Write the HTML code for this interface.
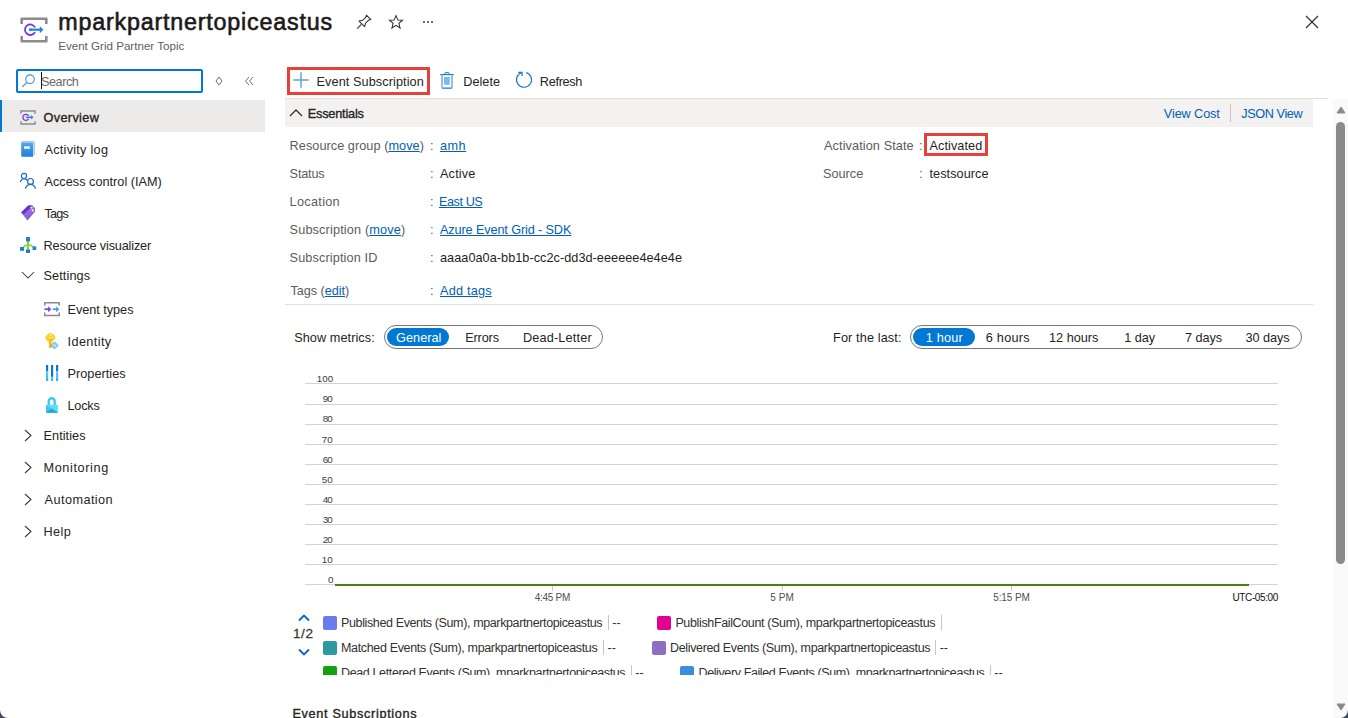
<!DOCTYPE html>
<html><head><meta charset="utf-8"><style>
html,body{margin:0;padding:0;width:1348px;height:718px;overflow:hidden;background:#fff}
body{position:relative;font-family:"Liberation Sans", sans-serif}
.t{position:absolute;white-space:nowrap;line-height:1;font-family:"Liberation Sans", sans-serif}
.a{position:absolute}
svg{position:absolute;overflow:visible}
</style></head><body>
<!-- header icon -->
<svg width="28" height="26" style="left:20px;top:17px" viewBox="0 0 28 26">
 <path d="M1.7 7 V1.7 H26.3 V7" fill="none" stroke="#8c8c8c" stroke-width="2.6" stroke-linejoin="round"/>
 <path d="M1.7 19 V24.3 H26.3 V19" fill="none" stroke="#8c8c8c" stroke-width="2.6" stroke-linejoin="round"/>
 <path d="M15 10.3 A5.3 5.3 0 1 0 15 15.1" fill="none" stroke="#7a30dc" stroke-width="1.8"/>
 <circle cx="10.3" cy="12.7" r="1.45" fill="#1f84e3"/>
 <path d="M10.3 12.7 H21" stroke="#1f84e3" stroke-width="2.2"/>
 <path d="M19.8 9.2 L23.4 12.7 L19.8 16.3 Z" fill="#1f84e3"/>
</svg>
<!-- pin -->
<svg width="16" height="16" style="left:356px;top:14px" viewBox="0 0 16 16">
 <path d="M10.4 1.2 L14.9 5.6 L12.7 6.1 L9.6 9.2 L8.6 12.6 L3 7.1 L6.6 6.3 L9.7 3.3 Z" fill="none" stroke="#323130" stroke-width="1.05" stroke-linejoin="round"/>
 <path d="M5.4 10.3 L1.2 14.6" stroke="#323130" stroke-width="1.1"/>
</svg>
<!-- star -->
<svg width="16" height="16" style="left:388px;top:14px" viewBox="0 0 16 16">
 <path d="M8 1.6 L9.9 6.1 L14.5 6.3 L10.9 9.3 L12.1 14 L8 11.4 L3.9 14 L5.1 9.3 L1.5 6.3 L6.1 6.1 Z" fill="none" stroke="#323130" stroke-width="1.05" stroke-linejoin="miter"/>
</svg>
<!-- ellipsis -->
<div class=a style="left:423px;top:21px;width:2px;height:2px;background:#6a6a6a"></div>
<div class=a style="left:427px;top:21px;width:2px;height:2px;background:#6a6a6a"></div>
<div class=a style="left:431px;top:21px;width:2px;height:2px;background:#6a6a6a"></div>
<!-- close -->
<svg width="14" height="14" style="left:1305px;top:15px" viewBox="0 0 14 14">
 <path d="M1 1 L13 13 M13 1 L1 13" stroke="#323130" stroke-width="1.2"/>
</svg>

<!-- search box -->
<div class=a style="left:16px;top:69px;width:183px;height:20px;border:2px solid #0078d4;border-radius:2px;background:#fff"></div>
<svg width="16" height="16" style="left:21px;top:73px" viewBox="0 0 16 16">
 <circle cx="9" cy="6.2" r="4.3" fill="none" stroke="#3a8de0" stroke-width="1.1"/>
 <path d="M5.9 9.3 L1.3 13.9" stroke="#3a8de0" stroke-width="1.2"/>
</svg>
<div class=a style="left:41px;top:72px;width:1px;height:17px;background:#111"></div>
<svg width="10" height="10" style="left:214px;top:76px" viewBox="0 0 10 10">
 <path d="M5 1 L8 5 L5 9 L2 5 Z" fill="none" stroke="#6e6e6e" stroke-width="1"/>
</svg>
<svg width="12" height="10" style="left:244px;top:76px" viewBox="0 0 12 10">
 <path d="M5 1 L1.5 5 L5 9 M9 1 L5.5 5 L9 9" fill="none" stroke="#6e6e6e" stroke-width="1"/>
</svg>

<!-- sidebar highlight -->
<div class=a style="left:0;top:100px;width:265px;height:32px;background:#edebe9"></div>
<div class=a style="left:0;top:100px;width:2px;height:32px;background:#0078d4"></div>
<!-- overview icon -->
<svg width="16" height="15" style="left:20px;top:110px" viewBox="0 0 28 26">
 <path d="M1.7 6.5 V1.7 H26.3 V6.5" fill="none" stroke="#8c8c8c" stroke-width="2.6"/>
 <path d="M1.7 19.5 V24.3 H26.3 V19.5" fill="none" stroke="#8c8c8c" stroke-width="2.6"/>
 <path d="M15 10.3 A5.3 5.3 0 1 0 15 15.1" fill="none" stroke="#7a30dc" stroke-width="2.2"/>
 <path d="M10.3 12.7 H21" stroke="#1f84e3" stroke-width="2.6"/>
 <path d="M19.5 8.8 L23.6 12.7 L19.5 16.6 Z" fill="#1f84e3"/>
</svg>
<!-- activity log -->
<svg width="16" height="16" style="left:20px;top:141px" viewBox="0 0 16 16">
 <defs><linearGradient id="gb" x1="0" y1="0" x2="0" y2="1"><stop offset="0" stop-color="#56a8ee"/><stop offset="1" stop-color="#1e7fd9"/></linearGradient></defs>
 <rect x="1.8" y="0.4" width="12.6" height="13.8" rx="0.9" fill="#d4e8f8" stroke="#6aa6dc" stroke-width="0.6"/>
 <rect x="1.3" y="1.5" width="11.8" height="14.3" rx="0.9" fill="url(#gb)"/>
 <rect x="4" y="5.4" width="5.9" height="2.3" fill="#ffffff"/>
</svg>
<!-- IAM -->
<svg width="17" height="17" style="left:20px;top:172px" viewBox="0 0 17 17">
 <circle cx="4" cy="3.9" r="2.6" fill="none" stroke="#1466d6" stroke-width="1.2"/>
 <path d="M0.4 9.4 Q2 6.6 4 6.6 Q6.2 6.6 7.3 8.4" fill="none" stroke="#1466d6" stroke-width="1.2" stroke-linecap="round"/>
 <circle cx="10.5" cy="9.4" r="2.9" fill="none" stroke="#1466d6" stroke-width="1.2"/>
 <path d="M5.4 16.2 Q7.3 12.4 10.5 12.4 Q13.7 12.4 15.5 16.2" fill="none" stroke="#1466d6" stroke-width="1.2" stroke-linecap="round"/>
</svg>
<!-- tags -->
<svg width="16" height="16" style="left:20px;top:205px" viewBox="0 0 16 16">
 <defs><linearGradient id="gt" x1="0" y1="0" x2="0.6" y2="1"><stop offset="0" stop-color="#b38ef0"/><stop offset="1" stop-color="#7d55c8"/></linearGradient></defs>
 <path d="M1.2 7.4 L8.2 0.4 H12.4 L15 3 V6.8 L7.4 15.6 Z" fill="url(#gt)"/>
 <path d="M1.2 7.4 L8.2 0.4 H12 L12.6 1 L4 9.2 L2.8 9 Z" fill="#6a2ee0"/>
 <ellipse cx="11.5" cy="2.6" rx="1.1" ry="0.9" fill="#fff"/>
 <ellipse cx="12.8" cy="5.5" rx="1.1" ry="0.9" fill="#fff"/>
</svg>
<!-- resource visualizer -->
<svg width="17" height="17" style="left:20px;top:237px" viewBox="0 0 17 17">
 <path d="M8 4 V12.5" stroke="#86d633" stroke-width="2"/>
 <path d="M2.5 11 Q8 5 14 10.5" fill="none" stroke="#86d633" stroke-width="1.6"/>
 <rect x="6" y="0" width="4" height="4.4" fill="#1f7fe0"/>
 <rect x="0" y="10" width="4" height="3.8" fill="#1f7fe0"/>
 <rect x="12.6" y="9.4" width="3.6" height="3.6" fill="#1f7fe0"/>
 <rect x="6" y="12.4" width="4" height="3.6" fill="#1f7fe0"/>
</svg>
<!-- settings chevron down -->
<svg width="14" height="8" style="left:21px;top:271px" viewBox="0 0 14 8">
 <path d="M1 1 L7 7 L13 1" fill="none" stroke="#3b3a39" stroke-width="1.05"/>
</svg>
<!-- event types icon -->
<svg width="16" height="15" style="left:44px;top:302px" viewBox="0 0 16 15">
 <path d="M0.8 3.6 V0.8 H15.2 V3.6" fill="none" stroke="#8a8a8a" stroke-width="1.5"/>
 <path d="M0.8 10.6 V13.4 H15.2 V10.6" fill="none" stroke="#8a8a8a" stroke-width="1.5"/>
 <path d="M0.5 7.2 H5" stroke="#8a3ce6" stroke-width="1.8"/>
 <path d="M4.2 4.2 L7.3 7.2 L4.2 10.2 Z" fill="#8a3ce6"/>
 <path d="M8.8 7.2 H13" stroke="#3da0f0" stroke-width="1.8"/>
 <path d="M12.2 4.2 L15.3 7.2 L12.2 10.2 Z" fill="#3da0f0"/>
</svg>
<!-- identity key -->
<svg width="14" height="17" style="left:45px;top:332px" viewBox="0 0 14 17">
 <defs><linearGradient id="gk" x1="0" y1="0" x2="0" y2="1"><stop offset="0" stop-color="#ffd21a"/><stop offset="1" stop-color="#f5b40a"/></linearGradient></defs>
 <path d="M5.6 0.9 Q7.2 0.9 8.6 2.6 L10.2 4.8 Q10.6 5.5 10.2 6.2 L8.4 8.6 Q7.5 9.4 6.7 9.4 V15.5 L5.4 16.3 L3.7 15 V13.5 L4.5 12.8 L3.7 12 V9.4 Q2.8 9.4 2 8.6 L0.6 6.4 Q0.2 5.5 0.6 4.8 L2.6 2.6 Q4 0.9 5.6 0.9 Z" fill="url(#gk)"/>
 <rect x="2.2" y="4.8" width="6.8" height="1.6" fill="#ffe57a"/>
 <circle cx="5.6" cy="3.2" r="0.9" fill="#fff"/>
 <path d="M9.5 9.9 L13 13.4 L9.5 16.9 L6 13.4 Z" fill="#a8dcf4" stroke="#3aa0db" stroke-width="0.9"/>
</svg>
<!-- properties -->
<svg width="14" height="17" style="left:45px;top:365px" viewBox="0 0 14 17">
 <defs><linearGradient id="gp1" x1="0" y1="0" x2="0" y2="1"><stop offset="0" stop-color="#1a6fd4"/><stop offset="0.35" stop-color="#1a6fd4"/><stop offset="0.4" stop-color="#5ccff7"/><stop offset="1" stop-color="#2bb6ea"/></linearGradient>
 <linearGradient id="gp2" x1="0" y1="0" x2="0" y2="1"><stop offset="0" stop-color="#1a6fd4"/><stop offset="0.7" stop-color="#1a6fd4"/><stop offset="0.75" stop-color="#5ccff7"/><stop offset="1" stop-color="#2bb6ea"/></linearGradient></defs>
 <rect x="1" y="0" width="2.2" height="16" fill="url(#gp1)"/>
 <rect x="6" y="0" width="2.2" height="16" fill="url(#gp2)"/>
 <rect x="11" y="0" width="2.2" height="16" fill="url(#gp1)"/>
</svg>
<!-- locks -->
<svg width="14" height="17" style="left:45px;top:396px" viewBox="0 0 14 17">
 <path d="M3.8 9 V5.2 A2.95 2.95 0 0 1 9.7 5.2 V9" fill="none" stroke="#3ccbf0" stroke-width="2.4"/>
 <rect x="1" y="8.9" width="11.9" height="7.8" fill="#55e0fa"/>
 <path d="M1 8.9 L12.9 16.7 H1 Z" fill="#46c2e8"/>
 <path d="M1 16.7 L7.2 12.6 L12.9 16.7 Z" fill="#2aa5d6"/>
</svg>
<!-- right chevrons -->
<svg width="8" height="13" style="left:24px;top:429px" viewBox="0 0 8 13"><path d="M1 1 L7 6.5 L1 12" fill="none" stroke="#3b3a39" stroke-width="1.05"/></svg>
<svg width="8" height="13" style="left:24px;top:461px" viewBox="0 0 8 13"><path d="M1 1 L7 6.5 L1 12" fill="none" stroke="#3b3a39" stroke-width="1.05"/></svg>
<svg width="8" height="13" style="left:24px;top:493px" viewBox="0 0 8 13"><path d="M1 1 L7 6.5 L1 12" fill="none" stroke="#3b3a39" stroke-width="1.05"/></svg>
<svg width="8" height="13" style="left:24px;top:525px" viewBox="0 0 8 13"><path d="M1 1 L7 6.5 L1 12" fill="none" stroke="#3b3a39" stroke-width="1.05"/></svg>

<!-- toolbar -->
<div class=a style="left:287px;top:67px;width:137px;height:22px;border:3px solid #e5403a"></div>
<svg width="16" height="16" style="left:293px;top:72px" viewBox="0 0 16 16">
 <path d="M8 0.3 V15.7 M0.2 8 H15.8" stroke="#5fa5e8" stroke-width="1.5"/>
</svg>
<svg width="14" height="17" style="left:440px;top:72px" viewBox="0 0 14 17">
 <path d="M4.7 2.2 V1.8 Q4.7 0.6 5.9 0.6 H8.1 Q9.3 0.6 9.3 1.8 V2.2" fill="none" stroke="#1a7ad8" stroke-width="1"/>
 <path d="M0.3 2.6 H13.7" stroke="#1a7ad8" stroke-width="1.2"/>
 <path d="M2 3.2 V15 M12 3.2 V15" stroke="#74b3ec" stroke-width="1.6"/>
 <path d="M1.8 15.3 Q2 16.1 2.8 16.1 H11.2 Q12 16.1 12.2 15.3" fill="none" stroke="#1a7ad8" stroke-width="1.1"/>
 <rect x="4" y="5" width="5.8" height="7.8" fill="#80b8ee"/>
</svg>
<svg width="18" height="18" style="left:515px;top:71px" viewBox="0 0 18 18">
 <path d="M11.3 1.6 A7.5 7.5 0 1 1 6.3 1.75" fill="none" stroke="#1a7ad8" stroke-width="1.2"/>
 <path d="M3.2 1.3 H7 V5" fill="none" stroke="#1a7ad8" stroke-width="1.3"/>
</svg>
<div class=a style="left:285px;top:98px;width:1043px;height:1px;background:#e1dfdd"></div>
<div class=a style="left:285px;top:99px;width:1028px;height:28px;background:#f3f2f1"></div>
<svg width="14" height="9" style="left:289px;top:108px" viewBox="0 0 14 9">
 <path d="M1 8 L7 2 L13 8" fill="none" stroke="#323130" stroke-width="1.3"/>
</svg>
<div class=a style="left:1230px;top:104px;width:1px;height:18px;background:#c8c6c4"></div>

<!-- activated box -->
<div class=a style="left:924px;top:133px;width:58px;height:17px;border:3px solid #e5403a"></div>
<!-- divider -->
<div class=a style="left:285px;top:304px;width:1028px;height:1px;background:#e1dfdd"></div>

<!-- metrics pills -->
<div class=a style="left:384px;top:325px;width:217px;height:22px;border:1px solid #767676;border-radius:12px"></div>
<div class=a style="left:387px;top:328px;width:62px;height:18px;background:#0078d4;border-radius:9px"></div>
<div class=a style="left:910px;top:325px;width:390px;height:22px;border:1px solid #767676;border-radius:12px"></div>
<div class=a style="left:913px;top:328px;width:62px;height:18px;background:#0078d4;border-radius:9px"></div>

<!-- chart grid -->
<svg width="1348" height="718" style="left:0;top:0">
 <g stroke="#d3d3d3" stroke-width="1"><path d="M305 383.5 H1278"/><path d="M305 404.5 H1278"/><path d="M305 424.5 H1278"/><path d="M305 444.5 H1278"/><path d="M305 464.5 H1278"/><path d="M305 484.5 H1278"/><path d="M305 504.5 H1278"/><path d="M305 524.5 H1278"/><path d="M305 544.5 H1278"/><path d="M305 564.5 H1278"/><path d="M305 584.5 H1278"/></g>
 <g stroke="#c8c8c8" stroke-width="1">
  <path d="M552.5 586 V591"/><path d="M782.5 586 V591"/><path d="M1011.5 586 V591"/>
 </g>
 <path d="M335 585 H1249" stroke="#4f7d14" stroke-width="2"/>
</svg>

<!-- legend -->
<svg width="14" height="9" style="left:297px;top:613px" viewBox="0 0 14 9"><path d="M2 7.5 L7 2.5 L12 7.5" fill="none" stroke="#0f62c6" stroke-width="1.9"/></svg>
<svg width="14" height="9" style="left:297px;top:648px" viewBox="0 0 14 9"><path d="M2 1.5 L7 6.5 L12 1.5" fill="none" stroke="#0f62c6" stroke-width="1.9"/></svg>
<div class=a style="left:0;top:0;width:1348px;height:675px;overflow:hidden">
 <div class=a style="left:323px;top:616px;width:14px;height:14px;border-radius:2px;background:#6a7aef"></div>
 <div class=a style="left:657px;top:616px;width:14px;height:14px;border-radius:2px;background:#e3008c"></div>
 <div class=a style="left:323px;top:641px;width:14px;height:14px;border-radius:2px;background:#2c9aa0"></div>
 <div class=a style="left:652px;top:641px;width:14px;height:14px;border-radius:2px;background:#8d6fc1"></div>
 <div class=a style="left:323px;top:666px;width:14px;height:14px;border-radius:2px;background:#14a10f"></div>
 <div class=a style="left:680px;top:666px;width:14px;height:14px;border-radius:2px;background:#3a8fdc"></div>
 <div class=a style="left:608px;top:615px;width:1px;height:15px;background:#c8c6c4"></div>
 <div class=a style="left:941px;top:615px;width:1px;height:15px;background:#c8c6c4"></div>
 <div class=a style="left:603px;top:640px;width:1px;height:15px;background:#c8c6c4"></div>
 <div class=a style="left:935px;top:640px;width:1px;height:15px;background:#c8c6c4"></div>
 <div class=a style="left:631px;top:665px;width:1px;height:15px;background:#c8c6c4"></div>
 <div class=a style="left:990px;top:665px;width:1px;height:15px;background:#c8c6c4"></div>
</div>

<!-- scrollbar -->
<div class=a style="left:1333px;top:99px;width:15px;height:619px;background:#fafafa"></div>
<svg width="10" height="8" style="left:1336px;top:106px" viewBox="0 0 10 8"><path d="M5 1 L9 7 H1 Z" fill="#8a8a8a" stroke="#8a8a8a" stroke-width="1" stroke-linejoin="round"/></svg>
<div class=a style="left:1336px;top:122px;width:9px;height:442px;background:#8a8a8a;border-radius:4.5px"></div>
<svg width="10" height="8" style="left:1336px;top:703px" viewBox="0 0 10 8"><path d="M1 1 H9 L5 7 Z" fill="#8a8a8a" stroke="#8a8a8a" stroke-width="1" stroke-linejoin="round"/></svg>

<div class=t style="left:58.20px;top:10.80px;font-size:23.3px;color:#1b1a19;letter-spacing:0.800px;-webkit-text-stroke:0.6px #1b1a19">mparkpartnertopiceastus</div><div class=t style="left:58.20px;top:39.90px;font-size:11.6px;color:#605e5c;">Event Grid Partner Topic</div><div class=t style="left:41.00px;top:76.00px;font-size:12.7px;color:#6b6a69;letter-spacing:-0.480px;">Search</div><div class=t style="left:43.50px;top:111.80px;font-size:12.7px;color:#252423;letter-spacing:0.357px;-webkit-text-stroke:0.35px #252423">Overview</div><div class=t style="left:44.50px;top:144.00px;font-size:12.7px;color:#252423;letter-spacing:0.255px;">Activity log</div><div class=t style="left:44.50px;top:176.00px;font-size:12.7px;color:#252423;letter-spacing:0.016px;">Access control (IAM)</div><div class=t style="left:44.50px;top:208.00px;font-size:12.7px;color:#252423;letter-spacing:-0.833px;">Tags</div><div class=t style="left:43.50px;top:240.00px;font-size:12.7px;color:#252423;letter-spacing:-0.167px;">Resource visualizer</div><div class=t style="left:43.50px;top:270.00px;font-size:12.7px;color:#252423;letter-spacing:0.100px;">Settings</div><div class=t style="left:67.50px;top:304.00px;font-size:12.7px;color:#252423;letter-spacing:-0.030px;">Event types</div><div class=t style="left:67.50px;top:336.00px;font-size:12.7px;color:#252423;letter-spacing:0.400px;">Identity</div><div class=t style="left:67.50px;top:368.00px;font-size:12.7px;color:#252423;letter-spacing:0.033px;">Properties</div><div class=t style="left:67.50px;top:400.00px;font-size:12.7px;color:#252423;letter-spacing:-0.200px;">Locks</div><div class=t style="left:43.50px;top:430.00px;font-size:12.7px;color:#252423;letter-spacing:0.057px;">Entities</div><div class=t style="left:43.50px;top:462.00px;font-size:12.7px;color:#252423;letter-spacing:0.611px;">Monitoring</div><div class=t style="left:44.50px;top:494.00px;font-size:12.7px;color:#252423;letter-spacing:0.444px;">Automation</div><div class=t style="left:43.50px;top:526.00px;font-size:12.7px;color:#252423;letter-spacing:0.367px;">Help</div><div class=t style="left:316.50px;top:76.00px;font-size:12.7px;color:#252423;letter-spacing:0.088px;">Event Subscription</div><div class=t style="left:463.20px;top:76.00px;font-size:12.7px;color:#252423;letter-spacing:0.040px;">Delete</div><div class=t style="left:539.80px;top:76.00px;font-size:12.7px;color:#252423;letter-spacing:-0.300px;">Refresh</div><div class=t style="left:307.70px;top:107.70px;font-size:12.7px;color:#252423;letter-spacing:-0.178px;-webkit-text-stroke:0.35px #252423">Essentials</div><div class=t style="left:1163.80px;top:107.60px;font-size:12.7px;color:#0060b4;letter-spacing:-0.100px;">View Cost</div><div class=t style="left:1241.30px;top:107.60px;font-size:12.7px;color:#0060b4;letter-spacing:-0.412px;">JSON View</div><div class=t style="left:289.60px;top:140.00px;font-size:12.7px;color:#5c5b5a;letter-spacing:0.050px;">Resource group (<u style="color:#0060b4">move</u>)</div><div class=t style="left:430.00px;top:140.00px;font-size:12.7px;color:#5c5b5a;">:</div><div class=t style="left:289.60px;top:168.00px;font-size:12.7px;color:#5c5b5a;letter-spacing:-0.180px;">Status</div><div class=t style="left:430.00px;top:168.00px;font-size:12.7px;color:#5c5b5a;">:</div><div class=t style="left:289.60px;top:196.00px;font-size:12.7px;color:#5c5b5a;letter-spacing:0.300px;">Location</div><div class=t style="left:430.00px;top:196.00px;font-size:12.7px;color:#5c5b5a;">:</div><div class=t style="left:289.60px;top:224.00px;font-size:12.7px;color:#5c5b5a;letter-spacing:0.150px;">Subscription (<u style="color:#0060b4">move</u>)</div><div class=t style="left:430.00px;top:224.00px;font-size:12.7px;color:#5c5b5a;">:</div><div class=t style="left:289.60px;top:252.00px;font-size:12.7px;color:#5c5b5a;letter-spacing:0.121px;">Subscription ID</div><div class=t style="left:430.00px;top:252.00px;font-size:12.7px;color:#5c5b5a;">:</div><div class=t style="left:290.60px;top:285.00px;font-size:12.7px;color:#5c5b5a;letter-spacing:-0.070px;">Tags (<u style="color:#0060b4">edit</u>)</div><div class=t style="left:430.00px;top:285.00px;font-size:12.7px;color:#5c5b5a;">:</div><div class=t style="left:440.00px;top:140.00px;font-size:12.7px;color:#0060b4;letter-spacing:0.500px;text-decoration:underline">amh</div><div class=t style="left:440.00px;top:168.00px;font-size:12.7px;color:#1f1e1d;letter-spacing:0.160px;">Active</div><div class=t style="left:439.00px;top:196.00px;font-size:12.7px;color:#0060b4;letter-spacing:-0.450px;text-decoration:underline">East US</div><div class=t style="left:440.00px;top:224.00px;font-size:12.7px;color:#0060b4;letter-spacing:-0.124px;text-decoration:underline">Azure Event Grid - SDK</div><div class=t style="left:440.00px;top:252.00px;font-size:12.7px;color:#1f1e1d;letter-spacing:0.040px;">aaaa0a0a-bb1b-cc2c-dd3d-eeeeee4e4e4e</div><div class=t style="left:440.00px;top:285.00px;font-size:12.7px;color:#0060b4;letter-spacing:0.214px;text-decoration:underline">Add tags</div><div class=t style="left:824.00px;top:139.50px;font-size:12.7px;color:#5c5b5a;letter-spacing:0.100px;">Activation State</div><div class=t style="left:919.00px;top:139.50px;font-size:12.7px;color:#5c5b5a;">:</div><div class=t style="left:929.50px;top:139.50px;font-size:12.7px;color:#1f1e1d;letter-spacing:0.062px;">Activated</div><div class=t style="left:823.00px;top:167.70px;font-size:12.7px;color:#5c5b5a;">Source</div><div class=t style="left:919.00px;top:167.70px;font-size:12.7px;color:#5c5b5a;">:</div><div class=t style="left:929.50px;top:167.70px;font-size:12.7px;color:#1f1e1d;letter-spacing:0.056px;">testsource</div><div class=t style="left:294.20px;top:332.00px;font-size:12.7px;color:#252423;letter-spacing:0.067px;">Show metrics:</div><div class=t style="left:396.00px;top:331.90px;font-size:12.7px;color:#ffffff;letter-spacing:0.050px;">General</div><div class=t style="left:465.20px;top:331.90px;font-size:12.7px;color:#252423;letter-spacing:-0.140px;">Errors</div><div class=t style="left:522.90px;top:331.90px;font-size:12.7px;color:#252423;letter-spacing:0.180px;">Dead-Letter</div><div class=t style="left:833.00px;top:332.00px;font-size:12.7px;color:#252423;letter-spacing:0.125px;">For the last:</div><div class=t style="left:925.80px;top:331.80px;font-size:12.7px;color:#ffffff;letter-spacing:0.200px;">1 hour</div><div class=t style="left:985.70px;top:331.80px;font-size:12.7px;color:#252423;letter-spacing:0.267px;">6 hours</div><div class=t style="left:1049.00px;top:331.80px;font-size:12.7px;color:#252423;">12 hours</div><div class=t style="left:1124.30px;top:331.80px;font-size:12.7px;color:#252423;letter-spacing:-0.075px;">1 day</div><div class=t style="left:1185.00px;top:331.80px;font-size:12.7px;color:#252423;letter-spacing:-0.060px;">7 days</div><div class=t style="left:1245.50px;top:331.80px;font-size:12.7px;color:#252423;letter-spacing:-0.050px;">30 days</div><div class=t style="left:316.80px;top:374.20px;font-size:9.8px;color:#3b3a39;letter-spacing:0.050px;">100</div><div class=t style="left:322.80px;top:394.31px;font-size:9.8px;color:#3b3a39;letter-spacing:-0.900px;">90</div><div class=t style="left:322.80px;top:414.42px;font-size:9.8px;color:#3b3a39;letter-spacing:-0.900px;">80</div><div class=t style="left:321.80px;top:434.53px;font-size:9.8px;color:#3b3a39;letter-spacing:0.100px;">70</div><div class=t style="left:322.80px;top:454.64px;font-size:9.8px;color:#3b3a39;letter-spacing:-0.900px;">60</div><div class=t style="left:321.80px;top:474.75px;font-size:9.8px;color:#3b3a39;letter-spacing:0.100px;">50</div><div class=t style="left:322.80px;top:494.86px;font-size:9.8px;color:#3b3a39;letter-spacing:-0.900px;">40</div><div class=t style="left:322.80px;top:514.97px;font-size:9.8px;color:#3b3a39;letter-spacing:-0.900px;">30</div><div class=t style="left:322.80px;top:535.08px;font-size:9.8px;color:#3b3a39;letter-spacing:-0.900px;">20</div><div class=t style="left:321.80px;top:555.19px;font-size:9.8px;color:#3b3a39;letter-spacing:0.100px;">10</div><div class=t style="left:327.90px;top:575.30px;font-size:9.8px;color:#3b3a39;">0</div><div class=t style="left:534.80px;top:593.00px;font-size:10px;color:#505050;letter-spacing:-0.300px;">4:45 PM</div><div class=t style="left:770.20px;top:593.00px;font-size:10px;color:#505050;letter-spacing:0.133px;">5 PM</div><div class=t style="left:993.20px;top:593.00px;font-size:10px;color:#505050;letter-spacing:-0.100px;">5:15 PM</div><div class=t style="left:1232.50px;top:592.90px;font-size:10px;color:#111111;letter-spacing:-0.387px;">UTC-05:00</div><div class=t style="left:292.40px;top:708.30px;font-size:12.7px;color:#252423;letter-spacing:0.672px;-webkit-text-stroke:0.35px #252423">Event Subscriptions</div>
<div class=a style="left:0;top:0;width:1348px;height:675px;overflow:hidden;pointer-events:none">
<div class=t style="left:292.90px;top:627.40px;font-size:13.5px;color:#3b3a39;letter-spacing:0.700px;-webkit-text-stroke:0.3px #3b3a39">1/2</div><div class=t style="left:341.00px;top:616.80px;font-size:12.5px;color:#323130;letter-spacing:-0.370px;">Published Events (Sum), mparkpartnertopiceastus</div><div class=t style="left:612.30px;top:616.80px;font-size:12.5px;color:#323130;">--</div><div class=t style="left:675.40px;top:616.80px;font-size:12.5px;color:#323130;letter-spacing:-0.357px;">PublishFailCount (Sum), mparkpartnertopiceastus</div><div class=t style="left:341.00px;top:641.50px;font-size:12.5px;color:#323130;letter-spacing:-0.341px;">Matched Events (Sum), mparkpartnertopiceastus</div><div class=t style="left:607.60px;top:641.50px;font-size:12.5px;color:#323130;">--</div><div class=t style="left:670.00px;top:641.50px;font-size:12.5px;color:#323130;letter-spacing:-0.348px;">Delivered Events (Sum), mparkpartnertopiceastus</div><div class=t style="left:939.70px;top:641.50px;font-size:12.5px;color:#323130;">--</div><div class=t style="left:341.00px;top:666.50px;font-size:12.5px;color:#323130;letter-spacing:-0.366px;">Dead Lettered Events (Sum), mparkpartnertopiceastus</div><div class=t style="left:635.30px;top:666.50px;font-size:12.5px;color:#323130;">--</div><div class=t style="left:698.50px;top:666.50px;font-size:12.5px;color:#323130;letter-spacing:-0.387px;">Delivery Failed Events (Sum), mparkpartnertopiceastus</div><div class=t style="left:994.30px;top:666.50px;font-size:12.5px;color:#323130;">--</div>
</div>
<div class=a style="left:0;top:0;width:1348px;height:718px;overflow:hidden">
 <svg width="1348" height="718" style="left:0;top:0">
  <path d="M0 710 L0 718 L8 718 A8 8 0 0 1 0 710 Z" fill="#3c4a5e"/>
  <path d="M1348 710 L1348 718 L1340 718 A8 8 0 0 0 1348 710 Z" fill="#3c4a5e"/>
 </svg>
</div>
</body></html>
